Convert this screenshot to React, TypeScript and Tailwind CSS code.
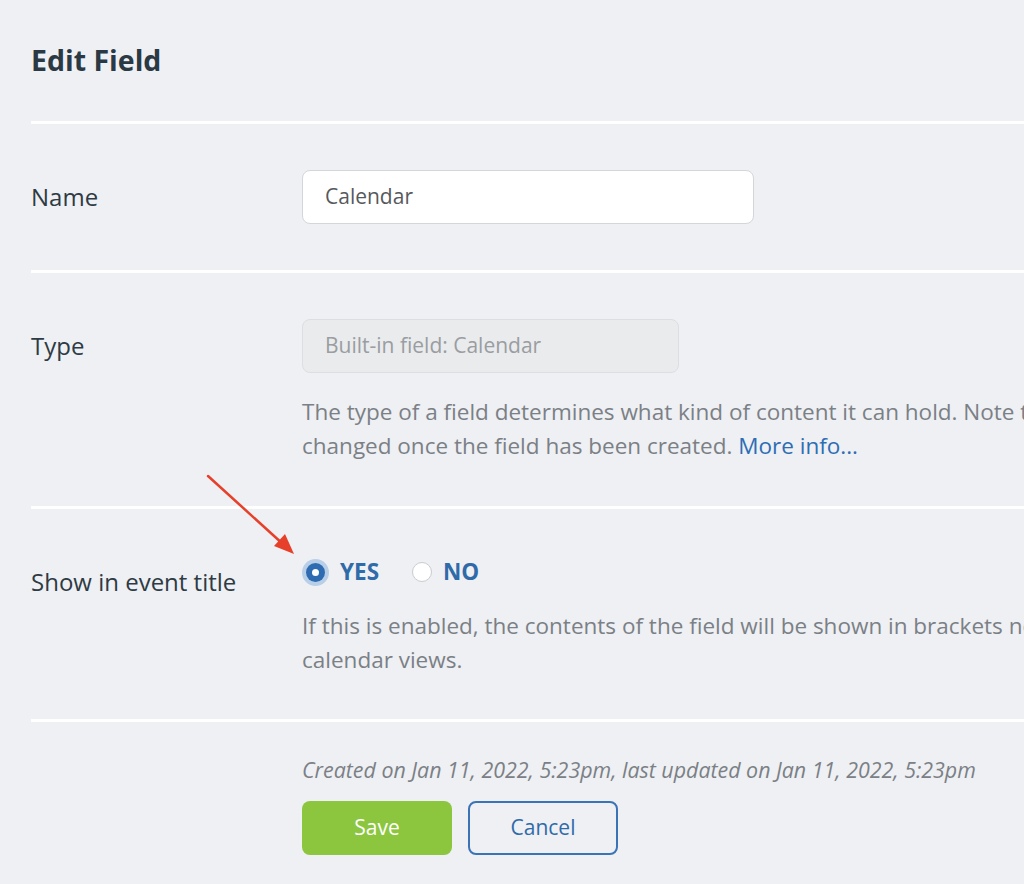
import React from "react";

function Divider() {
  return <div className="border-t-[3px] border-white" />;
}

function Radio({ checked, label }: { checked: boolean; label: string }) {
  return (
    <label className="flex items-center gap-[11px]">
      {checked ? (
        <span className="flex h-[27px] w-[27px] items-center justify-center rounded-full bg-[#b9cfe8]">
          <span className="flex h-[19px] w-[19px] items-center justify-center rounded-full bg-[#2f6bb0]">
            <span className="h-[7px] w-[7px] rounded-full bg-white" />
          </span>
        </span>
      ) : (
        <span className="h-[20px] w-[20px] rounded-full border border-[#c9ccd0] bg-white" />
      )}
      <span className="text-[22.5px] font-bold text-[#2f6aa9]">{label}</span>
    </label>
  );
}

export default function App() {
  return (
    <div
      className="relative h-[884px] w-[1024px] overflow-hidden bg-[#eef0f3] pl-[31px] text-[#2e3a44]"
      style={{ fontFamily: '"Open Sans", "Liberation Sans", sans-serif' }}
    >
      <h1 className="pt-[41px] pb-[42px] text-[28.5px] leading-[38px] font-bold text-[#2b3944]">
        Edit Field
      </h1>
      <Divider />

      {/* Name */}
      <div className="flex py-[46px]">
        <div className="flex h-[54px] w-[271px] shrink-0 items-center text-[24px]">Name</div>
        <div className="flex h-[54px] w-[452px] items-center rounded-[8px] border border-[#d3d6da] bg-white px-[22px] text-[21px] text-[#56595d]">
          Calendar
        </div>
      </div>
      <Divider />

      {/* Type */}
      <div className="flex pt-[46px] pb-[43px]">
        <div className="flex h-[54px] w-[271px] shrink-0 items-center text-[24px]">Type</div>
        <div className="min-w-0 flex-1">
          <div className="flex h-[54px] w-[377px] items-center rounded-[8px] border border-[#dcdfe2] bg-[#e9ebed] px-[22px] text-[21px] text-[#9a9da1]">
            Built-in field: Calendar
          </div>
          <p className="mt-[22px] whitespace-nowrap text-[22.5px] leading-[34px] text-[#7b8086]">
            The type of a field determines what kind of content it can hold. Note that the type cannot be
            <br />
            changed once the field has been created.{" "}
            <a className="text-[#2d6db4]">More info...</a>
          </p>
        </div>
      </div>
      <Divider />

      {/* Show in event title */}
      <div className="flex pt-[46px] pb-[42px]">
        <div className="flex h-[54px] w-[271px] shrink-0 items-center text-[24px]">
          Show in event title
        </div>
        <div className="min-w-0 flex-1">
          <div className="flex h-[34px] items-center gap-[33px]">
            <Radio checked label="YES" />
            <Radio checked={false} label="NO" />
          </div>
          <p className="mt-[20px] whitespace-nowrap text-[22.5px] leading-[34px] text-[#7b8086]">
            If this is enabled, the contents of the field will be shown in brackets next to the event title in
            <br />
            calendar views.
          </p>
        </div>
      </div>
      <Divider />

      {/* Footer */}
      <div className="pt-[31px] pl-[271px]">
        <p className="whitespace-nowrap text-[21.4px] leading-[34px] text-[#7b8086] italic">
          Created on Jan 11, 2022, 5:23pm, last updated on Jan 11, 2022, 5:23pm
        </p>
        <div className="mt-[14px] flex gap-[16px]">
          <button className="h-[54px] w-[150px] rounded-[8px] bg-[#8cc63f] text-[21px] text-white">
            Save
          </button>
          <button className="h-[54px] w-[150px] rounded-[8px] border-2 border-[#3b74b6] text-[21px] text-[#2f6aa9]">
            Cancel
          </button>
        </div>
      </div>

      {/* annotation arrow */}
      <svg className="absolute top-[470px] left-[200px]" width="110" height="95" viewBox="0 0 110 95">
        <line x1="8" y1="6" x2="84" y2="75" stroke="#e6402b" strokeWidth="2.5" strokeLinecap="round" />
        <polygon points="94,84 74,76 85,64" fill="#e6402b" />
      </svg>
    </div>
  );
}
